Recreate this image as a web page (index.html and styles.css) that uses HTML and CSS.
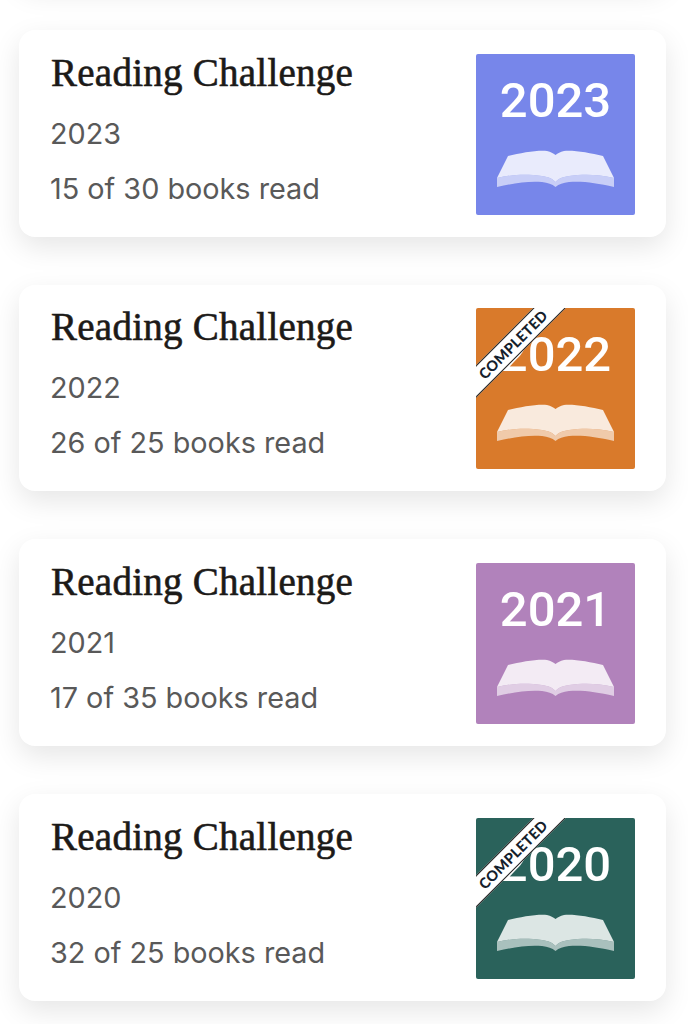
FILE: index.html
```html
<!DOCTYPE html>
<html>
<head>
    <title>Reading Challenges</title>
    <link rel="stylesheet" href="styles.css">
</head>
<body>
    <svg class="defs" width="0" height="0">
        <symbol id="book" viewBox="0 0 117 38">
            <path class="book-edge" d="M0 28C17 24 31 24 45 26C52 27 56 29 58.5 32C61 29 65 27 72 26C86 24 100 24 117 28V37C100 33 86 31 72 32C66 33 62 34 58.5 37C55 34 51 33 45 32C31 31 17 33 0 37Z"/>
            <path class="book-page" d="M0 28L11 6C24 3 40 0 50 1C54 2 56 3 58.5 5C61 3 63 2 67 1C77 0 93 3 106 6L117 28C100 24 86 24 72 26C65 27 61 29 58.5 32C56 29 52 27 45 26C31 24 17 24 0 28Z"/>
        </symbol>
    </svg>

    <div class="list">
        <div class="card card-prev"></div>

        <div class="card">
            <div class="info">
                <h2>Reading Challenge</h2>
                <div class="year">2023</div>
                <div class="count">15 of 30 books read</div>
            </div>
            <div class="cover blue">
                <div class="cover-year">2023</div>
                <svg class="book"><use href="#book"/></svg>
            </div>
        </div>

        <div class="card">
            <div class="info">
                <h2>Reading Challenge</h2>
                <div class="year">2022</div>
                <div class="count">26 of 25 books read</div>
            </div>
            <div class="cover orange">
                <div class="cover-year">2022</div>
                <svg class="book"><use href="#book"/></svg>
                <div class="ribbon">COMPLETED</div>
            </div>
        </div>

        <div class="card">
            <div class="info">
                <h2>Reading Challenge</h2>
                <div class="year">2021</div>
                <div class="count">17 of 35 books read</div>
            </div>
            <div class="cover purple">
                <div class="cover-year">2021</div>
                <svg class="book"><use href="#book"/></svg>
            </div>
        </div>

        <div class="card">
            <div class="info">
                <h2>Reading Challenge</h2>
                <div class="year">2020</div>
                <div class="count">32 of 25 books read</div>
            </div>
            <div class="cover green">
                <div class="cover-year">2020</div>
                <svg class="book"><use href="#book"/></svg>
                <div class="ribbon">COMPLETED</div>
            </div>
        </div>
    </div>
</body>
</html>
```

FILE: styles.css
```css
html, body {
    height: 100%;
}
body {
    margin: 0;
    background-color: #ffffff;
    font-family: "Inter", sans-serif;
    overflow: hidden;
}
.defs {
    position: absolute;
}
.list {
    display: flex;
    flex-direction: column;
    gap: 48px;
    padding: 0 22px 0 19px;
}
.card {
    display: flex;
    flex-shrink: 0;
    justify-content: space-between;
    height: 206.67px;
    box-sizing: border-box;
    padding: 23.6px 31px 0 32px;
    background-color: #ffffff;
    border-radius: 16px;
    box-shadow: 0 10px 28px rgba(0,0,0,0.1);
}
.card-prev {
    margin-top: -224.67px;
}
h2 {
    margin: 0;
    font-family: "Liberation Serif", serif;
    font-size: 39px;
    font-weight: 400;
    line-height: 38px;
    letter-spacing: 0.25px;
    white-space: nowrap;
    color: #1c1a18;
    -webkit-text-stroke: 0.6px #1c1a18;
}
.year {
    margin: 25px 0 0 -1px;
    font-size: 28.8px;
    line-height: 34px;
    color: #595959;
}
.count {
    margin: 21px 0 0 -1px;
    font-size: 28.8px;
    line-height: 34px;
    color: #595959;
}
.cover {
    position: relative;
    width: 159px;
    height: 161px;
    overflow: hidden;
    border-radius: 2px;
    text-align: center;
}
.cover-year {
    margin-top: 19px;
    font-family: "Roboto", sans-serif;
    font-size: 49px;
    font-weight: 500;
    line-height: 55px;
    color: #ffffff;
}
.book {
    display: block;
    width: 117px;
    height: 38px;
    margin: 22px auto 0;
}
.book-page {
    fill: #ffffff;
    fill-opacity: 0.84;
}
.book-edge {
    fill: #ffffff;
    fill-opacity: 0.6;
}
.blue { background-color: #7786ea; }
.orange { background-color: #d97a2b; }
.purple { background-color: #b182bb; }
.green { background-color: #2a625b; }
.ribbon {
    position: absolute;
    top: 25px;
    left: -38px;
    width: 150px;
    height: 21px;
    transform: rotate(-45deg);
    background-color: #ffffff;
    border-top: 1.5px solid #222222;
    border-bottom: 1px solid #222222;
    font-family: "Lato", sans-serif;
    font-size: 14.4px;
    font-weight: 900;
    line-height: 21px;
    letter-spacing: 0.3px;
    color: #15202b;
    text-align: center;
}
```
